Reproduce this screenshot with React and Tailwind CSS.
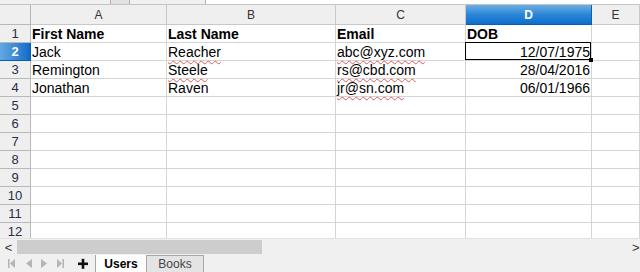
import React from 'react';

const cols = ['A', 'B', 'C', 'D', 'E'];

const rows = [
  [{ t: 'First Name', b: true }, { t: 'Last Name', b: true }, { t: 'Email', b: true }, { t: 'DOB', b: true }],
  [{ t: 'Jack' }, { t: 'Reacher', sq: true }, { t: 'abc@xyz.com', sq: true }, { t: '12/07/1975', r: true }],
  [{ t: 'Remington' }, { t: 'Steele', sq: true }, { t: 'rs@cbd.com', sq: true }, { t: '28/04/2016', r: true }],
  [{ t: 'Jonathan' }, { t: 'Raven' }, { t: 'jr@sn.com', sq: true }, { t: '06/01/1966', r: true }],
];

function Cell({ cell, selected }) {
  return (
    <div
      className={`relative h-[18px] border-r border-b border-[#d4d4d4] flex items-end overflow-visible px-[1px] ${cell?.r ? 'justify-end' : ''}`}
    >
      {cell && (
        <span
          className={`leading-[16px] whitespace-nowrap ${cell.b ? 'font-bold' : ''} ${cell.sq ? 'underline decoration-wavy decoration-[#e05a5a] decoration-1 underline-offset-[3px]' : ''}`}
        >
          {cell.t}
        </span>
      )}
      {selected && (
        <>
          <div className="absolute -left-px -top-px right-0 bottom-0 border border-black z-10" />
          <div className="absolute -right-[2px] -bottom-[2px] w-[4px] h-[4px] bg-black z-10" />
        </>
      )}
    </div>
  );
}

export default function App() {
  return (
    <div
      className="w-[640px] h-[272px] flex flex-col overflow-hidden bg-white text-black"
      style={{ fontFamily: '"Liberation Sans", Arial, sans-serif' }}
    >
      {/* formula bar remnant */}
      <div className="h-[5px] flex border-b border-[#c4c4c4]">
        <div className="w-[110px] bg-[#f0f0f0]" />
        <div className="w-[20px] bg-[#e2e2e2] border-x border-[#b0b0b0]" />
        <div className="w-[75px] bg-[#f0f0f0]" />
        <div className="flex-1 bg-white border-l border-[#b0b0b0]" />
      </div>

      {/* sheet grid */}
      <div className="h-[233px] overflow-hidden">
        <div className="grid grid-cols-[31px_136px_169px_130px_126px_1fr] text-[14px]">
          {/* column headers */}
          <div className="h-[20px] bg-[#efefef] border-r border-b border-[#b8b8b8]" />
          {cols.map((c) => (
            <div
              key={c}
              className={`h-[20px] border-r border-b flex items-center justify-center text-[12px] ${
                c === 'D'
                  ? 'bg-gradient-to-b from-[#6aaee4] via-[#2a86d6] to-[#0b6fcc] text-white font-bold border-[#0a5fae]'
                  : 'bg-[#efefef] text-[#333] border-[#c8c8c8]'
              }`}
            >
              {c}
            </div>
          ))}

          {Array.from({ length: 12 }, (_, i) => {
            const n = i + 1;
            const data = rows[i] || [];
            return (
              <React.Fragment key={n}>
                <div
                  className={`h-[18px] border-r border-b flex items-center justify-center text-[13px] leading-[15px] ${
                    n === 2
                      ? 'bg-gradient-to-r from-[#63a8e1] to-[#0a6dc9] text-white font-bold border-[#0a5fae]'
                      : 'bg-[#efefef] text-[#2b2b4a] border-[#b8b8b8]'
                  }`}
                >
                  {n}
                </div>
                {[0, 1, 2, 3, 4].map((ci) => (
                  <Cell key={ci} cell={data[ci]} selected={n === 2 && ci === 3} />
                ))}
              </React.Fragment>
            );
          })}
        </div>
      </div>

      {/* horizontal scrollbar */}
      <div className="h-[17px] flex items-stretch bg-[#f0f0f0] border-t border-[#e2e2e2]">
        <div className="w-[17px] flex items-center justify-center text-[13px] text-[#333] leading-none">&lt;</div>
        <div className="w-[245px] my-[1px] bg-[#cdcdcd]" />
        <div className="flex-1" />
        <div className="w-[8px] flex items-center text-[13px] text-[#333] leading-none">&gt;</div>
      </div>

      {/* sheet tabs */}
      <div className="h-[17px] flex items-stretch bg-[#f0f0f0]">
        <div className="w-[95px] flex items-center">
          <svg width="95" height="17" viewBox="0 0 95 17">
            <g fill="#b4b4b4">
              <rect x="8" y="4" width="1.5" height="9" />
              <polygon points="15,4 15,13 10,8.5" />
              <polygon points="32,4 32,13 26,8.5" />
              <polygon points="41,4 41,13 47,8.5" />
              <polygon points="57,4 57,13 62,8.5" />
              <rect x="62.5" y="4" width="1.5" height="9" />
            </g>
            <g fill="#111">
              <rect x="78" y="7.5" width="10" height="2.6" />
              <rect x="81.7" y="3.8" width="2.6" height="10" />
            </g>
          </svg>
        </div>
        <div className="w-[52px] bg-white border-x border-[#a8a8a8] flex items-center justify-center text-[12px] font-bold leading-none">
          Users
        </div>
        <div className="w-[57px] bg-[#e4e4e4] border-r border-t border-[#a8a8a8] flex items-center justify-center text-[12px] text-[#444] leading-none">
          Books
        </div>
        <div className="flex-1" />
      </div>
    </div>
  );
}
